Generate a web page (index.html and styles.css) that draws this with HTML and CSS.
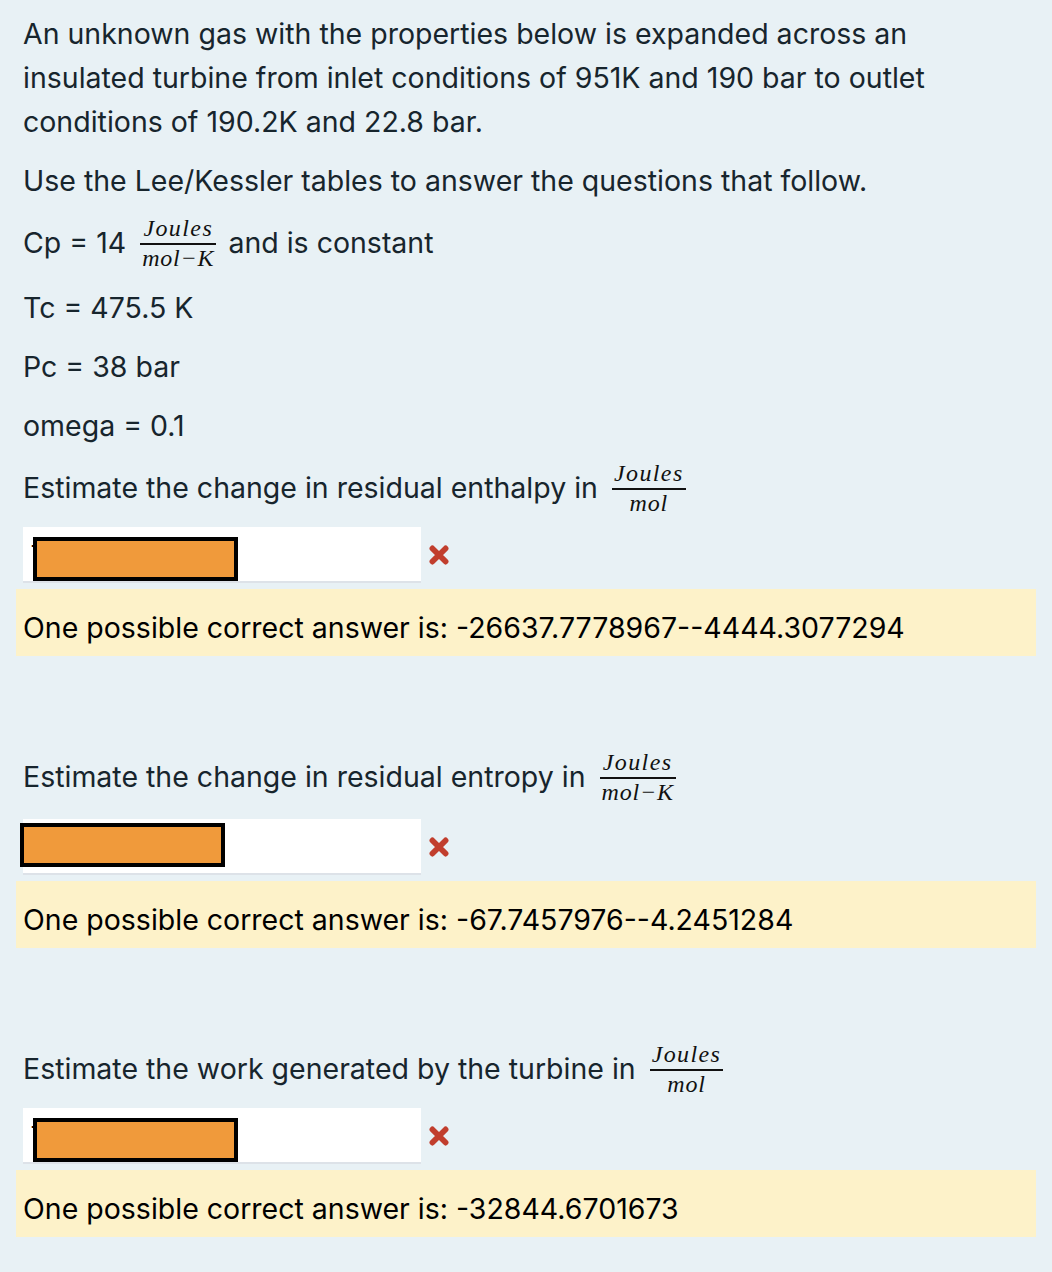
FILE: index.html
```html
<!DOCTYPE html>
<html lang="en">
<head>
<meta charset="utf-8">
<title>Turbine question</title>
<link rel="stylesheet" href="styles.css">
</head>
<body>
<div class="page">
  <p class="txt">An unknown gas with the properties below is expanded across an insulated turbine from inlet conditions of 951K and 190 bar to outlet conditions of 190.2K and 22.8 bar.</p>
  <p class="txt">Use the Lee/Kessler tables to answer the questions that follow.</p>
  <p class="txt frac-line cp">Cp = 14<span class="frac"><span class="num">Joules</span><span class="den">mol−K</span></span>and is constant</p>
  <p class="txt">Tc = 475.5 K</p>
  <p class="txt">Pc = 38 bar</p>
  <p class="txt">omega = 0.1</p>

  <div class="q">
    <p class="txt frac-line">Estimate the change in residual enthalpy in<span class="frac"><span class="num">Joules</span><span class="den">mol</span></span></p>
    <div class="answer-row">
      <div class="input"><span class="minus">-</span><span class="redact"></span></div>
      <svg class="wrong" viewBox="0 0 20 20" width="22" height="22"><path d="M4 4 L16 16 M16 4 L4 16" stroke="#c13e2d" stroke-width="5.2" stroke-linecap="round"/></svg>
    </div>
    <div class="feedback">One possible correct answer is: -26637.7778967--4444.3077294</div>
  </div>

  <div class="q">
    <p class="txt frac-line tall">Estimate the change in residual entropy in<span class="frac"><span class="num">Joules</span><span class="den">mol−K</span></span></p>
    <div class="answer-row">
      <div class="input"><span class="redact redact-left"></span></div>
      <svg class="wrong" viewBox="0 0 20 20" width="22" height="22"><path d="M4 4 L16 16 M16 4 L4 16" stroke="#c13e2d" stroke-width="5.2" stroke-linecap="round"/></svg>
    </div>
    <div class="feedback">One possible correct answer is: -67.7457976--4.2451284</div>
  </div>

  <div class="q last">
    <p class="txt frac-line">Estimate the work generated by the turbine in<span class="frac"><span class="num">Joules</span><span class="den">mol</span></span></p>
    <div class="answer-row">
      <div class="input"><span class="minus">-</span><span class="redact"></span></div>
      <svg class="wrong" viewBox="0 0 20 20" width="22" height="22"><path d="M4 4 L16 16 M16 4 L4 16" stroke="#c13e2d" stroke-width="5.2" stroke-linecap="round"/></svg>
    </div>
    <div class="feedback">One possible correct answer is: -32844.6701673</div>
  </div>
</div>
</body>
</html>
```
FILE: styles.css
```css
html, body {
  margin: 0;
  padding: 0;
  background: #e8f1f5;
}

.page {
  font-family: Inter, "Noto Sans", sans-serif;
  font-size: 28.5px;
  color: #17252d;
  padding: 12px 16px 0 23px;
}

.txt {
  margin: 0 0 15px 0;
  line-height: 44px;
  max-width: 970px;
}

.frac-line {
  height: 50px;
  display: flex;
  align-items: center;
  margin-bottom: 14px;
}

.cp {
  margin-bottom: 18px;
}

.frac {
  display: inline-flex;
  flex-direction: column;
  align-items: center;
  font-family: "Liberation Serif", "Times New Roman", serif;
  font-style: italic;
  font-size: 24px;
  line-height: 27px;
  color: #111;
  margin: 0 12px 0 14px;
}

.frac .num {
  letter-spacing: 1.4px;
  padding: 0 2px 1px;
}

.frac .den {
  border-top: 2px solid #111;
  padding: 0 2px;
  letter-spacing: 0.8px;
  align-self: stretch;
  text-align: center;
}

.q {
  margin-bottom: 96px;
}

.q.last {
  margin-bottom: 0;
}

.q .frac-line {
  margin-bottom: 14px;
}

.q .tall {
  margin-bottom: 17px;
}

.answer-row {
  display: flex;
  align-items: center;
}

.input {
  position: relative;
  width: 398px;
  height: 54px;
  background: #fff;
  border-bottom: 2px solid #dde2e8;
}

.minus {
  position: absolute;
  left: 7px;
  top: 2px;
  color: #000;
  font-size: 26px;
}

.redact {
  position: absolute;
  left: 10px;
  top: 10px;
  width: 197px;
  height: 36px;
  background: #f09a3b;
  border: 4px solid #000;
}

.redact-left {
  left: -3px;
  top: 4px;
}

.wrong {
  margin-left: 7px;
  display: block;
}

.feedback {
  margin: 6px 0 0 -7px;
  padding: 17px 7px 6px;
  line-height: 44px;
  background: #fdf2c9;
  color: #000;
}
```
